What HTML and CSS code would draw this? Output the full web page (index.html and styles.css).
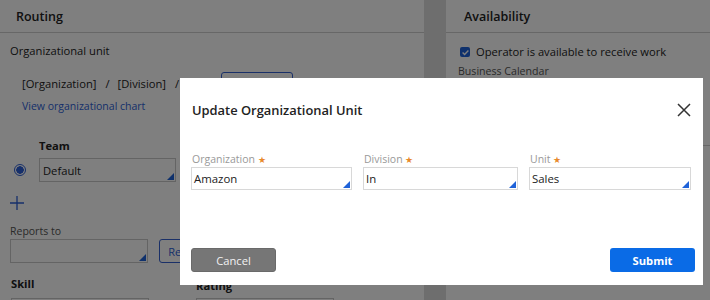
FILE: index.html
```html
<!DOCTYPE html>
<html>
<head>
<meta charset="utf-8">
<link rel="stylesheet" href="styles.css">
</head>
<body>
<div class="page">
  <section class="panel left">
    <div class="panel-head">Routing</div>
    <div class="panel-body">
      <div class="field-title">Organizational unit</div>
      <div class="org-row">
        <span>[Organization]</span><span class="sep">/</span><span>[Division]</span><span class="sep">/</span><span>[Unit]</span>
        <span class="btn-outline">Update</span>
      </div>
      <a class="link">View organizational chart</a>
      <div class="team-label">Team</div>
      <div class="team-row">
        <span class="radio"></span>
        <div class="box select w137">Default</div>
      </div>
      <div class="plus">
        <svg width="14" height="14" viewBox="0 0 14 14"><path d="M7 0v14M0 7h14" stroke="#2d5fd6" stroke-width="1.3" fill="none"/></svg>
      </div>
      <div class="small-label">Reports to</div>
      <div class="reports-row">
        <div class="box select w138"></div>
        <span class="btn-outline tall">Remove</span>
      </div>
      <div class="two-col">
        <div class="col">
          <div class="bold-label">Skill</div>
          <div class="box w138"></div>
        </div>
        <div class="col">
          <div class="bold-label">Rating</div>
          <div class="box w138"></div>
        </div>
      </div>
    </div>
  </section>
  <div class="gutter"></div>
  <section class="panel right">
    <div class="panel-head">Availability</div>
    <div class="panel-body r">
      <label class="check-row"><span class="checkbox"><svg width="9" height="9" viewBox="0 0 9 9"><path d="M1.6 4.6l2 2 3.8-4" stroke="#fff" stroke-width="1.4" fill="none"/></svg></span>Operator is available to receive work</label>
      <div class="small-label cal">Business Calendar</div>
      <div class="spacer"></div>
      <div class="row-line"></div>
      <div class="spacer2"></div>
      <div class="box op">Operator</div>
    </div>
  </section>
</div>
<div class="overlay"></div>
<div class="modal">
  <div class="modal-head">
    <h2 class="modal-title">Update Organizational Unit</h2>
    <span class="close">
      <svg width="14" height="14" viewBox="0 0 14 14"><path d="M1 1l12 12M13 1L1 13" stroke="#333" stroke-width="1.5" fill="none"/></svg>
    </span>
  </div>
  <div class="fields">
    <div class="field">
      <div class="flabel">Organization <span class="star">★</span></div>
      <div class="finput">Amazon</div>
    </div>
    <div class="field">
      <div class="flabel">Division <span class="star">★</span></div>
      <div class="finput">In</div>
    </div>
    <div class="field">
      <div class="flabel">Unit <span class="star">★</span></div>
      <div class="finput">Sales</div>
    </div>
  </div>
  <div class="modal-foot">
    <button class="btn cancel">Cancel</button>
    <button class="btn submit">Submit</button>
  </div>
</div>
</body>
</html>
```
FILE: styles.css
```css
* { box-sizing: border-box; }
html, body { margin: 0; padding: 0; }
body {
  width: 710px;
  height: 300px;
  overflow: hidden;
  font-family: "Open Sans", "Liberation Sans", sans-serif;
  color: #333;
  background: #fff;
  position: relative;
}
.page {
  display: flex;
  height: 300px;
  overflow: hidden;
}
.panel { background: #fff; overflow: hidden; }
.left { width: 424px; }
.gutter { width: 22px; background: #dcdcdc; }
.right { flex: 1; }
.panel-head {
  height: 33px;
  border-bottom: 1px solid #cfcfcf;
  display: flex;
  align-items: center;
  padding-left: 16px;
  font-size: 12.5px;
  font-weight: 600;
  color: #222;
}
.right .panel-head { padding-left: 18px; }
.panel-body {
  display: flex;
  flex-direction: column;
  padding: 9px 0 0 10px;
}
.field-title { font-size: 11.2px; line-height: 18px; color: #222; }
.org-row {
  display: flex;
  align-items: center;
  height: 23px;
  margin-top: 12px;
  padding-left: 12px;
  font-size: 11.2px;
  color: #222;
}
.sep { margin: 0 8px 0 9px; }
.btn-outline {
  margin-left: 5px;
  height: 24px;
  width: 72px;
  border: 1px solid #3560d0;
  border-radius: 3px;
  color: #2d5fd6;
  font-size: 11px;
  display: flex;
  align-items: center;
  justify-content: center;
}
.link {
  margin-top: 3px;
  padding-left: 12px;
  font-size: 10.5px;
  line-height: 16px;
  color: #2d5fd6;
}
.team-label {
  margin-top: 23px;
  padding-left: 29px;
  font-size: 11.2px;
  font-weight: 700;
  line-height: 18px;
  color: #222;
}
.team-row {
  margin-top: 3px;
  display: flex;
  align-items: center;
}
.radio {
  width: 12px;
  height: 12px;
  border-radius: 50%;
  border: 1px solid #2d5fd6;
  margin-left: 4px;
  margin-right: 13px;
  background: radial-gradient(circle, #2d5fd6 0 3.5px, #fff 4px);
}
.box {
  height: 24px;
  border: 1px solid #c8c8c8;
  background: #fff;
  position: relative;
  font-size: 11.2px;
  display: flex;
  align-items: center;
  padding-left: 3px;
  color: #222;
}
.select::after, .finput::after {
  content: "";
  position: absolute;
  right: 1px;
  bottom: 1px;
  width: 0;
  height: 0;
  border-left: 7px solid transparent;
  border-bottom: 7px solid #1f62d8;
}
.w137 { width: 137px; }
.w138 { width: 138px; }
.plus {
  margin-top: 14px;
  height: 14px;
  display: flex;
}
.small-label {
  margin-top: 13px;
  font-size: 10.5px;
  line-height: 16px;
  color: #555;
}
.reports-row {
  display: flex;
  align-items: center;
}
.btn-outline.tall { margin-left: 11px; width: 60px; }
.two-col {
  display: flex;
  gap: 47px;
  margin-top: 12px;
  padding-left: 1px;
}
.col { display: flex; flex-direction: column; }
.bold-label {
  font-size: 11.2px;
  font-weight: 700;
  line-height: 18px;
  color: #222;
  margin-bottom: 5px;
}
.col + .col .bold-label { margin-top: 2px; margin-bottom: 3px; }
.panel-body.r { padding: 10px 0 0 12px; }
.check-row {
  display: flex;
  align-items: center;
  font-size: 11.2px;
  line-height: 18px;
  color: #222;
}
.checkbox {
  width: 10px;
  height: 10px;
  border-radius: 2px;
  background: #1f62d8;
  margin-left: 2px;
  margin-right: 6px;
  display: flex;
  align-items: center;
  justify-content: center;
}
.cal { margin-top: 2px; font-size: 10.6px; }
.spacer { height: 66px; }
.row-line { height: 1px; background: #cfcfcf; margin-left: -12px; }
.spacer2 { height: 116px; }
.box.op { width: 88px; height: 20px; margin-left: 1px; }
.overlay {
  position: absolute;
  inset: 0;
  background: rgba(0, 0, 0, 0.5);
}
.modal {
  position: absolute;
  left: 180px;
  top: 78px;
  width: 523px;
  height: 207px;
  background: #fff;
  padding: 22px 10px 0 11px;
  display: flex;
  flex-direction: column;
}
.modal-head {
  display: flex;
  justify-content: space-between;
  align-items: center;
  height: 20px;
}
.modal-title {
  margin: 0;
  padding-left: 1px;
  font-size: 12.9px;
  font-weight: 600;
  color: #222;
}
.close { display: flex; margin-right: 2px; }
.fields {
  display: grid;
  grid-template-columns: 161px 155px 162px;
  column-gap: 11px;
  margin-top: 31px;
}
.flabel {
  height: 16px;
  font-size: 10.5px;
  line-height: 16px;
  color: #999;
  padding-left: 1px;
}
.star { color: #e8892b; font-size: 9px; line-height: 1; }
.finput {
  height: 23px;
  border: 1px solid #d8d8d8;
  position: relative;
  font-size: 11.4px;
  color: #222;
  display: flex;
  align-items: center;
  padding-left: 2px;
}
.modal-foot {
  display: flex;
  justify-content: space-between;
  margin-top: 58px;
  margin-right: -2px;
}
.btn {
  width: 85px;
  height: 24px;
  border-radius: 3px;
  font-family: "Open Sans", "Liberation Sans", sans-serif;
  font-size: 11.2px;
  border: 0;
  color: #fff;
  padding: 0;
}
.cancel { background: #767676; border: 1px solid #6a6a6a; color: #f2f2f2; }
.submit { background: #0a6be6; font-weight: 700; }
```
